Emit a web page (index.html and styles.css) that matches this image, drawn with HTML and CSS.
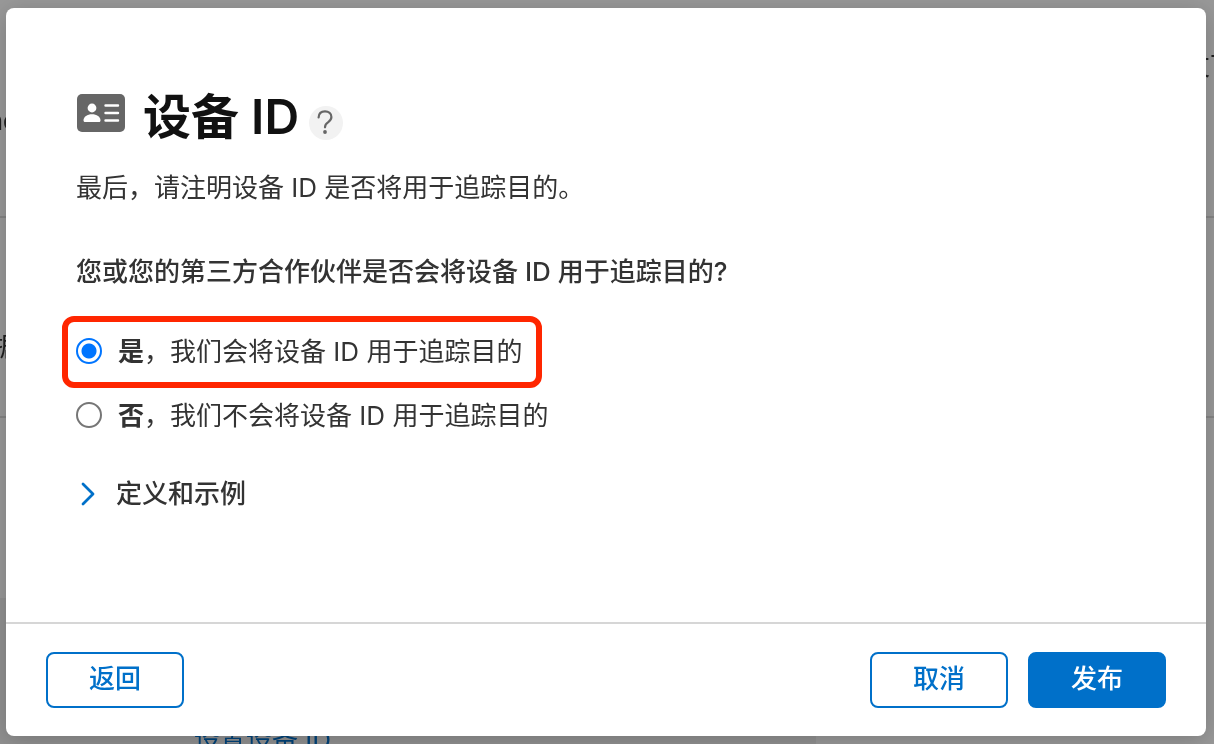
FILE: index.html
```html
<!DOCTYPE html>
<html lang="zh-CN">
	<head>
		<meta charset="UTF-8" />
		<meta name="viewport" content="width=device-width, initial-scale=1.0" />
		<title>设备 ID</title>
		<link rel="stylesheet" href="styles.css">
	</head>
	<body>
		<!-- 遮罩下面的页面 -->
		<div class="page" aria-hidden="true">
			<div class="page-line line-top"></div>
			<div class="page-line line-bottom"></div>
			<div class="page-panel"></div>
			<span class="page-text text-name">ne</span>
			<span class="page-text text-data">据</span>
			<span class="page-text text-more">攵下</span>
			<span class="page-text text-link">设置设备 ID</span>
		</div>

		<form class="dialog" role="dialog" aria-labelledby="title">
			<main class="dialog-body">
				<header class="heading">
					<svg class="card-icon" viewBox="0 0 48 38" aria-hidden="true">
						<rect width="48" height="38" rx="5" fill="#666" />
						<circle cx="15" cy="14" r="4.4" fill="#fff" />
						<path d="M6.5 26.2c0-3.400 3.800-6 8.500-6s8.500 2.600 8.500 6c0 1-.5 1.800-1.500 1.800H8c-1 0-1.500-.8-1.500-1.800z" fill="#fff" />
						<path d="M28.500 11.500h12.500M28.500 19h12.500M28.500 26.500h12.500" stroke="#fff" stroke-width="2.400" stroke-linecap="round" />
					</svg>
					<h1 id="title">设备 ID</h1>
					<button class="help" type="button" aria-label="帮助">
						<svg viewBox="0 0 34 34" aria-hidden="true">
							<path d="M9.600 11.500C9.800 7.500 12.500 5.400 16 5.400c3.700 0 6.400 2.200 6.400 5.600 0 2.500-1.300 3.900-3.400 5.300-2.200 1.400-3 2.500-3 5" fill="none" stroke="#666" stroke-width="2.200" stroke-linecap="round" />
							<circle cx="16" cy="26" r="1.900" fill="#666" />
						</svg>
					</button>
				</header>
				<p class="intro">最后，请注明设备 ID 是否将用于追踪目的。</p>

				<fieldset class="question">
					<legend>您或您的第三方合作伙伴是否会将设备 ID 用于追踪目的?</legend>
					<label class="option marked">
						<input type="radio" name="tracking" value="yes" checked />
						<span><b>是</b>，我们会将设备 ID 用于追踪目的</span>
					</label>
					<label class="option">
						<input type="radio" name="tracking" value="no" />
						<span><b>否</b>，我们不会将设备 ID 用于追踪目的</span>
					</label>
				</fieldset>

				<button class="toggle" type="button" aria-expanded="false">
					<svg viewBox="0 0 16 24" aria-hidden="true">
						<path d="M3 2l10 10L3 22" fill="none" stroke="#0070c9" stroke-width="2.800" stroke-linecap="round" stroke-linejoin="round" />
					</svg>
					定义和示例
				</button>
			</main>

			<footer class="dialog-footer">
				<button class="btn" type="button">返回</button>
				<div class="actions">
					<button class="btn" type="button">取消</button>
					<button class="btn btn-primary" type="submit">发布</button>
				</div>
			</footer>
		</form>
	</body>
</html>
```

FILE: styles.css
```css
:root {
	box-sizing: border-box;
}
*,
::before,
::after {
	box-sizing: inherit;
}
body {
	display: flex;
	min-height: 100vh;
	margin: 0;
	padding: 8px 8px 8px 6px;
	background-color: #999;
	color: #333;
	font-family: Inter, "Noto Sans CJK SC", sans-serif;
	font-size: 26px;
	line-height: 40px;
}
button {
	font: inherit;
	cursor: pointer;
}

/* 遮罩下面的页面 */
.page {
	position: fixed;
	inset: 0;
	overflow: hidden;
}
.page-line {
	position: absolute;
	left: 0;
	right: 0;
	height: 2px;
	background-color: #858585;
}
.line-top {
	top: 216px;
}
.line-bottom {
	top: 416px;
}
.page-panel {
	position: absolute;
	top: 598px;
	bottom: 0;
	left: 0;
	width: 816px;
	background-color: #919191;
}
.page-text {
	position: absolute;
	color: #1f1f1f;
	white-space: nowrap;
}
.text-name {
	top: 101px;
	left: -13px;
	font-weight: 600;
}
.text-data {
	top: 327px;
	left: -7px;
}
.text-more {
	top: 46px;
	left: 1184px;
}
.text-link {
	top: 720px;
	left: 194px;
	color: #00437a;
}

.dialog {
	position: relative;
	display: flex;
	flex: 1;
	flex-direction: column;
	background-color: #fff;
	border-radius: 8px;
	box-shadow: 0 4px 24px rgba(0, 0, 0, 0.2);
}
.dialog-body {
	flex: 1;
	padding: 72px 70px 40px;
}

.heading {
	display: flex;
	align-items: center;
	height: 72px;
}
.card-icon {
	width: 48px;
	height: 38px;
	margin: 0 18px 6px 1px;
}
h1 {
	margin: 2px 0 0;
	color: #111;
	font-size: 48px;
	font-weight: 600;
	line-height: 72px;
}
.help {
	width: 34px;
	height: 34px;
	margin: 14px 0 0 10px;
	padding: 0;
	border: 0;
	border-radius: 50%;
	background-color: #f2f2f2;
}
.help svg {
	display: block;
}

.intro {
	margin: 16px 0 44px;
}

.question {
	margin: 0;
	padding: 0;
	border: 0;
}
legend {
	margin-bottom: 24px;
	padding: 0;
	font-weight: 500;
}
.option {
	display: flex;
	align-items: center;
	width: fit-content;
	margin-left: -14px;
	padding: 10px 14px 10px 8px;
	border: 6px solid transparent;
	border-radius: 12px;
}
.option + .option {
	margin-top: -8px;
}
.marked {
	border-color: #ff2600;
}
.option input {
	appearance: none;
	width: 26px;
	height: 26px;
	margin: 0 16px 2px 0;
	border: 2px solid #767676;
	border-radius: 50%;
}
.option input:checked {
	border-color: #0075ff;
	background: radial-gradient(circle, #0075ff 7px, #fff 8px);
}
.option b {
	font-weight: 700;
}

.toggle {
	display: flex;
	align-items: center;
	margin-top: 22px;
	padding: 0 4px;
	border: 0;
	background: none;
	color: #333;
	font-weight: 500;
}
.toggle svg {
	width: 16px;
	height: 24px;
	margin-right: 20px;
}

.dialog-footer {
	display: flex;
	justify-content: space-between;
	padding: 28px 40px;
	border-top: 2px solid #d6d6d6;
}
.actions {
	display: flex;
	gap: 20px;
}
.btn {
	width: 138px;
	height: 56px;
	padding: 0 0 2px;
	border: 2px solid #0070c9;
	border-radius: 8px;
	background-color: #fff;
	color: #0070c9;
	font-weight: 500;
}
.btn-primary {
	background-color: #0070c9;
	color: #fff;
}
```
